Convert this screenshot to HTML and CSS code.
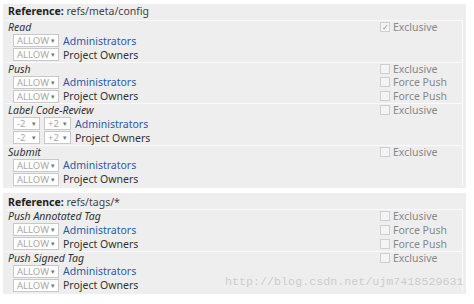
FILE: index.html
```html
<!DOCTYPE html>
<html lang="en">

<head>
    <meta charset="UTF-8">
    <title>Access Rights</title>
    <link rel="stylesheet" href="styles.css">
</head>

<body>
    <div class="section">
        <div class="ref-name"><b>Reference:</b> refs/meta/config</div>

        <div class="permission">
            <div class="row">
                <span class="perm-name">Read</span>
                <label class="opt"><span class="box checked">&#10003;</span>Exclusive</label>
            </div>
            <div class="row rule">
                <span class="select">ALLOW <i>&#9662;</i></span>
                <a class="group">Administrators</a>
            </div>
            <div class="row rule">
                <span class="select">ALLOW <i>&#9662;</i></span>
                <span class="group">Project Owners</span>
            </div>
        </div>

        <div class="permission">
            <div class="row">
                <span class="perm-name">Push</span>
                <label class="opt"><span class="box"></span>Exclusive</label>
            </div>
            <div class="row rule">
                <span class="select">ALLOW <i>&#9662;</i></span>
                <a class="group">Administrators</a>
                <label class="opt"><span class="box"></span>Force Push</label>
            </div>
            <div class="row rule">
                <span class="select">ALLOW <i>&#9662;</i></span>
                <span class="group">Project Owners</span>
                <label class="opt"><span class="box"></span>Force Push</label>
            </div>
        </div>

        <div class="permission">
            <div class="row">
                <span class="perm-name">Label Code-Review</span>
                <label class="opt"><span class="box"></span>Exclusive</label>
            </div>
            <div class="row rule">
                <span class="select small">-2 <i>&#9662;</i></span>
                <span class="select small">+2 <i>&#9662;</i></span>
                <a class="group">Administrators</a>
            </div>
            <div class="row rule">
                <span class="select small">-2 <i>&#9662;</i></span>
                <span class="select small">+2 <i>&#9662;</i></span>
                <span class="group">Project Owners</span>
            </div>
        </div>

        <div class="permission">
            <div class="row">
                <span class="perm-name">Submit</span>
                <label class="opt"><span class="box"></span>Exclusive</label>
            </div>
            <div class="row rule">
                <span class="select">ALLOW <i>&#9662;</i></span>
                <a class="group">Administrators</a>
            </div>
            <div class="row rule">
                <span class="select">ALLOW <i>&#9662;</i></span>
                <span class="group">Project Owners</span>
            </div>
        </div>
    </div>

    <div class="section">
        <div class="ref-name"><b>Reference:</b> refs/tags/*</div>

        <div class="permission">
            <div class="row">
                <span class="perm-name">Push Annotated Tag</span>
                <label class="opt"><span class="box"></span>Exclusive</label>
            </div>
            <div class="row rule">
                <span class="select">ALLOW <i>&#9662;</i></span>
                <a class="group">Administrators</a>
                <label class="opt"><span class="box"></span>Force Push</label>
            </div>
            <div class="row rule">
                <span class="select">ALLOW <i>&#9662;</i></span>
                <span class="group">Project Owners</span>
                <label class="opt"><span class="box"></span>Force Push</label>
            </div>
        </div>

        <div class="permission">
            <div class="row">
                <span class="perm-name">Push Signed Tag</span>
                <label class="opt"><span class="box"></span>Exclusive</label>
            </div>
            <div class="row rule">
                <span class="select">ALLOW <i>&#9662;</i></span>
                <a class="group">Administrators</a>
            </div>
            <div class="row rule">
                <span class="select">ALLOW <i>&#9662;</i></span>
                <span class="group">Project Owners</span>
            </div>
        </div>
    </div>

    <div class="watermark">http://blog.csdn.net/ujm7418529631</div>
</body>

</html>
```

FILE: styles.css
```css
body {
    margin: 0;
    padding: 4px 0 0 3px;
    width: 474px;
    height: 304px;
    box-sizing: border-box;
    background: #fff;
    font-family: "Noto Sans", "Open Sans", Arial, sans-serif;
    font-size: 10.5px;
    color: #333;
    position: relative;
    overflow: hidden;
}

.section {
    width: 463px;
    background: #eeeeee;
    padding: 0 3px 2px 3px;
    box-sizing: border-box;
    margin-bottom: 5px;
}

.ref-name {
    height: 16px;
    line-height: 15px;
    padding-left: 2px;
    color: #444;
}

.section + .section .ref-name {
    line-height: 18px;
}

.ref-name b {
    font-weight: bold;
    color: #222;
}

.permission {
    border-top: 1px solid #fafafa;
    border-right: 1px solid #fafafa;
}

.row {
    display: flex;
    align-items: center;
    height: 14px;
}

.row:first-child {
    height: 12.5px;
}

.perm-name {
    font-style: italic;
    padding-left: 2px;
    color: #333;
}

.rule {
    padding-left: 7px;
}

.select {
    display: inline-flex;
    align-items: center;
    box-sizing: border-box;
    width: 46px;
    height: 13px;
    padding: 0 3px 0 3px;
    margin-right: 4px;
    background: #fff;
    border: 1px solid #c8c8c8;
    color: #a8a8a8;
    font-size: 9.5px;
}

.select.small {
    width: 27px;
}

.select i {
    margin-left: auto;
    font-style: normal;
    font-size: 7px;
    color: #777;
}

.group {
    color: #333;
}

a.group {
    color: #2a5aa8;
}

.opt {
    margin-left: auto;
    width: 82px;
    display: flex;
    align-items: center;
    color: #888;
}

.box {
    width: 8px;
    height: 8px;
    border: 1px solid #cfcfcf;
    background: #f4f4f4;
    margin-right: 3px;
    font-size: 8px;
    line-height: 8px;
    text-align: center;
    color: #888;
}

.watermark {
    position: absolute;
    left: 225px;
    top: 275px;
    font-family: "Liberation Mono", monospace;
    font-size: 11.7px;
    color: rgba(195, 195, 195, 0.8);
}
```
